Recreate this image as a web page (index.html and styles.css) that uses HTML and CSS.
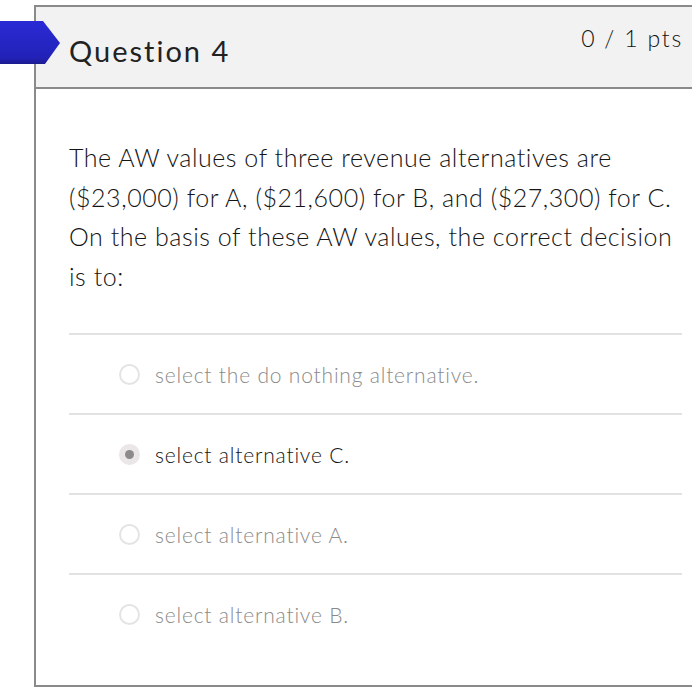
FILE: index.html
```html
<!DOCTYPE html>
<html>
<head>
<meta charset="utf-8">
<link rel="stylesheet" href="styles.css">
</head>
<body>
<div class="page">
  <div class="card">
    <div class="header">
      <h2 class="title">Question 4</h2>
      <div class="pts">0 / 1 pts</div>
    </div>
    <div class="body">
      <p class="question">The AW values of three revenue alternatives are ($23,000) for A, ($21,600) for B, and ($27,300) for C. On the basis of these AW values, the correct decision is to:</p>
      <ul class="answers">
        <li class="answer"><span class="radio"></span><span class="label">select the do nothing alternative.</span></li>
        <li class="answer selected"><span class="radio"></span><span class="label">select alternative C.</span></li>
        <li class="answer"><span class="radio"></span><span class="label">select alternative A.</span></li>
        <li class="answer"><span class="radio"></span><span class="label">select alternative B.</span></li>
      </ul>
    </div>
  </div>
  <svg class="flag" width="62" height="46" viewBox="0 0 62 46">
    <defs>
      <linearGradient id="fg" x1="0" y1="0" x2="0" y2="1">
        <stop offset="0" stop-color="#2a2ad6"/>
        <stop offset="0.85" stop-color="#2222b8"/>
        <stop offset="1" stop-color="#1c1c90"/>
      </linearGradient>
    </defs>
    <polygon points="0,0 43,0 60,22 45,43 0,43" fill="url(#fg)"/>
  </svg>
</div>
</body>
</html>
```
FILE: styles.css
```css
html, body {
  margin: 0;
  padding: 0;
  background: #ffffff;
}
body {
  font-family: Lato, "Open Sans", sans-serif;
  color: #2d3b45;
}
.page {
  position: relative;
  padding: 5px 0 0 34px;
  width: 660px;
}
.card {
  border: 2px solid #8a8a8a;
  border-right: none;
  height: 682px;
  box-sizing: border-box;
  display: flex;
  flex-direction: column;
}
.header {
  background: #f2f2f2;
  height: 82px;
  box-sizing: border-box;
  border-bottom: 2px solid #8a8a8a;
  display: flex;
  justify-content: space-between;
  align-items: flex-start;
  padding: 0 11px 0 33px;
}
.title {
  margin: 24px 0 0 0;
  font-weight: 400;
  font-size: 29px;
  letter-spacing: 2px;
  line-height: 40px;
  color: #222;
}
.pts {
  margin-top: 17px;
  font-size: 23px;
  letter-spacing: 1.8px;
  line-height: 28px;
  font-weight: 300;
  color: #111;
  white-space: nowrap;
}
.body {
  padding: 49px 0 0 33px;
  width: 615px;
}
.question {
  margin: 0;
  font-size: 25px;
  letter-spacing: 0.55px;
  line-height: 39.5px;
  font-weight: 300;
  color: #151515;
}
.answers {
  list-style: none;
  margin: 37px 0 0 0;
  padding: 0;
  width: 613px;
  border-top: 2px solid #e2e2e2;
}
.answer {
  height: 78px;
  border-bottom: 2px solid #e2e2e2;
  display: flex;
  align-items: center;
  padding-left: 50px;
  font-size: 21px;
  letter-spacing: 0.8px;
  font-weight: 300;
  color: #8a8a8a;
}
.answer:last-child {
  border-bottom: none;
}
.radio {
  width: 17px;
  height: 17px;
  border: 2px solid #e4e4e4;
  border-radius: 50%;
  margin-right: 15px;
  flex: none;
  display: flex;
  align-items: center;
  justify-content: center;
}
.selected .radio {
  background: #ebe6e8;
  border-color: #ebe6e8;
}
.selected .radio::after {
  content: "";
  width: 9px;
  height: 9px;
  border-radius: 50%;
  background: #8d8a8c;
}
.selected {
  color: #151515;
}
.flag {
  position: absolute;
  left: 0;
  top: 21px;
}
```
